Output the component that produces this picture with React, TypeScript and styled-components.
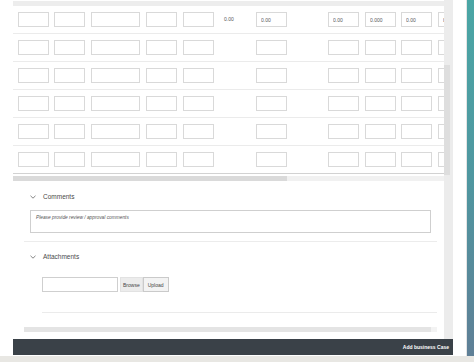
import React from 'react';
import styled, { createGlobalStyle } from 'styled-components';

const GlobalStyle = createGlobalStyle`
  html, body {
    margin: 0;
    padding: 0;
    background: #fff;
  }
  body {
    font-family: "Liberation Sans", Arial, sans-serif;
  }
`;

const Page = styled.div`
  width: 474px;
  height: 362px;
  display: flex;
  flex-direction: column;
  overflow: hidden;
  background: #fff;
`;

const Top = styled.div`
  height: 356px;
  display: flex;
`;

const Main = styled.div`
  width: 453px;
  display: flex;
  flex-direction: column;
`;

const Body = styled.div`
  height: 339px;
  display: flex;
`;

const ScrollArea = styled.div`
  width: 444px;
  display: flex;
  flex-direction: column;
  overflow: hidden;
`;

const ScrollTrack = styled.div`
  width: 9px;
  background: #ececec;
  display: flex;
  flex-direction: column;
`;

const ScrollThumb = styled.div`
  margin-top: 65px;
  width: 6px;
  height: 110px;
  background: #dedede;
`;

const Gutter = styled.div`
  flex: 1;
  background: #fff;
`;

const Divider = styled.div`
  width: 1px;
  background: #e4e4e4;
`;

const SideStrip = styled.div`
  width: 7px;
  background: linear-gradient(#4aa6a5, #4f97a0 50%, #5f7f96);
`;

const BottomStrip = styled.div`
  height: 6px;
  background: #e8e7e3;
`;

const Footer = styled.div`
  margin-left: 13px;
  height: 16px;
  background: #3a4148;
  display: flex;
  align-items: center;
  justify-content: flex-end;
  padding-right: 4px;
`;

const FooterButton = styled.span`
  color: #fff;
  font-size: 5px;
  font-weight: bold;
`;

/* table */

const TableWrap = styled.div`
  margin-left: 13px;
  width: 431px;
  overflow: hidden;
`;

const HeaderStrip = styled.div`
  margin-top: 1px;
  height: 5px;
  background: #ededed;
`;

const Row = styled.div<{ $cols: string; $last?: boolean }>`
  display: grid;
  grid-template-columns: ${(p) => p.$cols};
  height: 27px;
  border-bottom: 1px solid ${(p) => (p.$last ? '#d2d2d2' : '#ebebeb')};
  width: max-content;
`;

const Cell = styled.div<{ $pad?: number }>`
  padding-top: 6px;
  padding-left: ${(p) => p.$pad ?? 5}px;
  box-sizing: border-box;
  display: flex;
  align-items: flex-start;
`;

const CellInput = styled.input<{ $w: number }>`
  box-sizing: border-box;
  width: ${(p) => p.$w}px;
  height: 15px;
  margin: 0;
  padding: 0 0 0 4px;
  border: 1px solid #d9d9d9;
  border-radius: 0;
  background: #fff;
  font-family: "Liberation Sans", Arial, sans-serif;
  font-size: 5px;
  color: #555;
  outline: none;
`;

const CellText = styled.span`
  font-size: 5px;
  color: #555;
  line-height: 15px;
`;

const HScroll = styled.div`
  margin-top: 2px;
  height: 5px;
  background: #f1f1f1;
  display: flex;
`;

const HThumb = styled.div<{ $w: number; $color?: string }>`
  width: ${(p) => p.$w}px;
  background: ${(p) => p.$color ?? '#dadada'};
`;

/* accordion sections */

const Section = styled.div<{ $border?: boolean }>`
  margin: 0 7px 0 24px;
  border-bottom: ${(p) => (p.$border ? '1px solid #ececec' : 'none')};
`;

const SectionHeader = styled.div<{ $h: number; $top?: number }>`
  height: ${(p) => p.$h}px;
  padding-top: ${(p) => p.$top ?? 0}px;
  display: flex;
  align-items: center;
  gap: 7px;
  padding-left: 6px;
`;

const SectionTitle = styled.span`
  font-size: 6.5px;
  color: #4a4a4a;
`;

const CommentBox = styled.textarea`
  display: block;
  box-sizing: border-box;
  margin: 0 0 8px 6px;
  width: 401px;
  height: 23px;
  padding: 4px 5px;
  border: 1px solid #cfcfcf;
  border-radius: 0;
  resize: none;
  font-family: "Liberation Sans", Arial, sans-serif;
  font-size: 4.8px;
  font-style: italic;
  color: #444;
  outline: none;

  &::placeholder {
    color: #555;
    font-style: italic;
  }
`;

const UploadBlock = styled.div`
  margin: 7px 0 0 18px;
  padding-bottom: 20px;
  border-bottom: 1px solid #ebebeb;
`;

const FileRow = styled.div`
  display: flex;
  align-items: stretch;
  height: 15px;
`;

const FileField = styled.input`
  box-sizing: border-box;
  width: 76px;
  height: 15px;
  margin: 0 2px 0 0;
  border: 1px solid #cfcfcf;
  border-radius: 0;
  padding: 0 3px;
  outline: none;
`;

const FileButton = styled.button<{ $strong?: boolean }>`
  box-sizing: border-box;
  height: 15px;
  margin: 0;
  padding: 0 ${(p) => (p.$strong ? 4 : 2)}px;
  border: 1px solid ${(p) => (p.$strong ? '#cacaca' : '#e2e2e2')};
  border-radius: 0;
  background: ${(p) => (p.$strong ? '#f3f3f3' : '#ececec')};
  font-family: "Liberation Sans", Arial, sans-serif;
  font-size: 5px;
  color: #444;
`;

const BottomScroll = styled.div`
  margin: 14px 7px 0 24px;
  height: 5px;
  background: #f3f3f3;
  display: flex;
`;

const Chevron: React.FC = () => (
  <svg width="6" height="4" viewBox="0 0 6 4">
    <polyline points="0.5,0.8 3,3.2 5.5,0.8" fill="none" stroke="#666" strokeWidth="0.8" />
  </svg>
);

type Col = { w: number; kind: 'input' | 'text' | 'empty'; inputW?: number; pad?: number };

const columns: Col[] = [
  { w: 36, kind: 'input' },
  { w: 37, kind: 'input' },
  { w: 55, kind: 'input', inputW: 49 },
  { w: 37, kind: 'input' },
  { w: 37, kind: 'input' },
  { w: 36, kind: 'text', pad: 9 },
  { w: 37, kind: 'input' },
  { w: 35, kind: 'empty' },
  { w: 37, kind: 'input' },
  { w: 36, kind: 'input' },
  { w: 37, kind: 'input' },
  { w: 40, kind: 'input' },
];

const firstRow: Record<number, string> = {
  5: '0.00',
  6: '0.00',
  8: '0.00',
  9: '0.000',
  10: '0.00',
  11: '0.00',
};

const template = columns.map((c) => `${c.w}px`).join(' ');

const App: React.FC = () => {
  const rows = [0, 1, 2, 3, 4, 5];
  return (
    <>
      <GlobalStyle />
      <Page>
        <Top>
          <Main>
            <Body>
              <ScrollArea>
                <TableWrap>
                  <HeaderStrip />
                  {rows.map((r) => (
                    <Row key={r} $cols={template} $last={r === rows.length - 1}>
                      {columns.map((c, i) => {
                        const value = r === 0 ? firstRow[i] ?? '' : '';
                        if (c.kind === 'empty') return <Cell key={i} />;
                        if (c.kind === 'text')
                          return (
                            <Cell key={i} $pad={c.pad}>
                              <CellText>{value}</CellText>
                            </Cell>
                          );
                        return (
                          <Cell key={i}>
                            <CellInput $w={c.inputW ?? 31} defaultValue={value} readOnly />
                          </Cell>
                        );
                      })}
                    </Row>
                  ))}
                  <HScroll>
                    <HThumb $w={274} />
                  </HScroll>
                </TableWrap>

                <Section $border>
                  <SectionHeader $h={27} $top={2}>
                    <Chevron />
                    <SectionTitle>Comments</SectionTitle>
                  </SectionHeader>
                  <CommentBox placeholder="Please provide review / approval comments" />
                </Section>

                <Section>
                  <SectionHeader $h={27} $top={1}>
                    <Chevron />
                    <SectionTitle>Attachments</SectionTitle>
                  </SectionHeader>
                  <UploadBlock>
                    <FileRow>
                      <FileField readOnly />
                      <FileButton>Browse</FileButton>
                      <FileButton $strong>Upload</FileButton>
                    </FileRow>
                  </UploadBlock>
                </Section>

                <BottomScroll>
                  <HThumb $w={407} $color="#e4e4e4" />
                </BottomScroll>
              </ScrollArea>
              <ScrollTrack>
                <ScrollThumb />
              </ScrollTrack>
            </Body>
            <Footer>
              <FooterButton>Add business Case</FooterButton>
            </Footer>
          </Main>
          <Gutter />
          <Divider />
          <SideStrip />
        </Top>
        <BottomStrip />
      </Page>
    </>
  );
};

export default App;
